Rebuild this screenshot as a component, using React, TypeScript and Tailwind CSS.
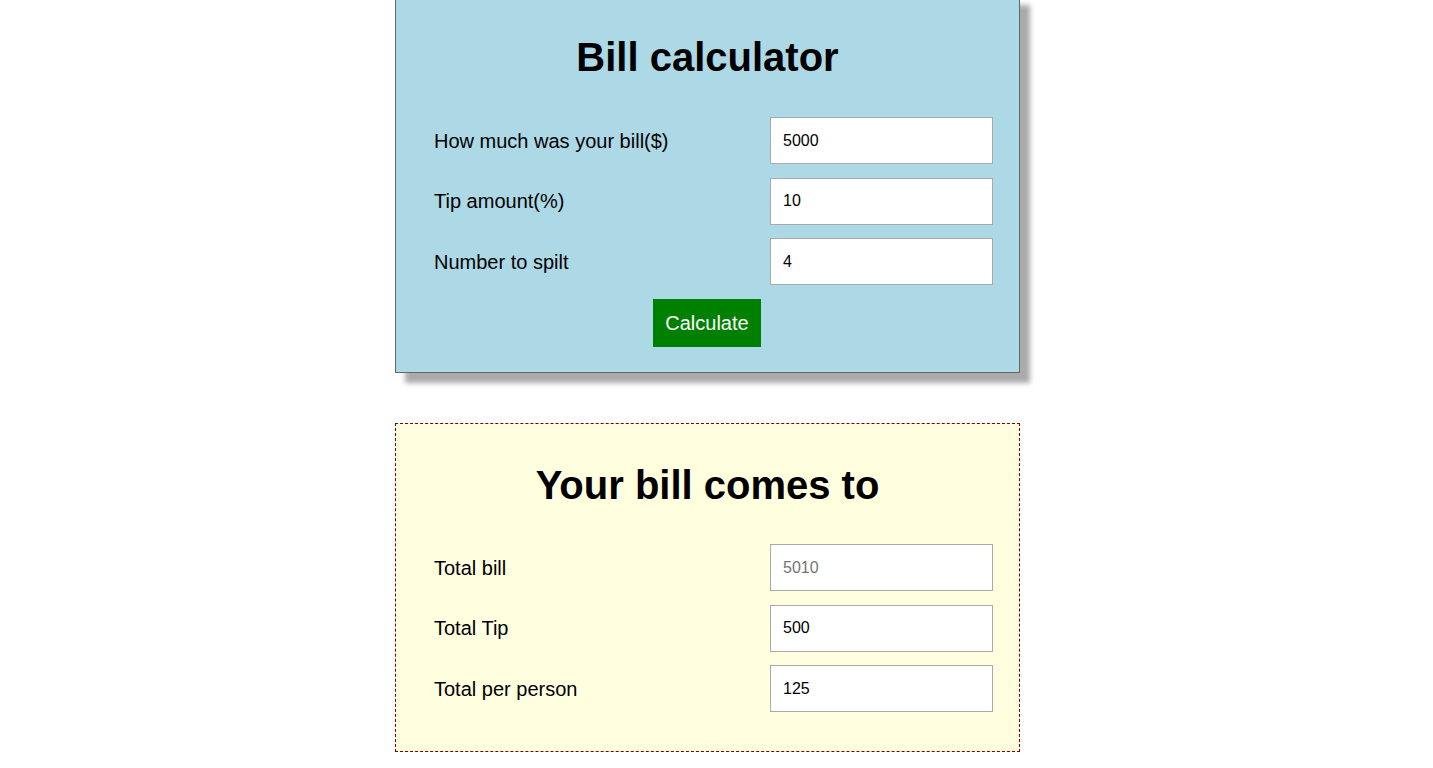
import { useState } from "react";

const fieldClass =
  "w-[223px] h-[47px] border border-[#a9a9a9] bg-white px-[12px] text-[16px] text-black outline-none placeholder:text-[#757575]";

function Row({
  label,
  value,
  placeholder,
  onChange,
}: {
  label: string;
  value: string;
  placeholder?: string;
  onChange?: (v: string) => void;
}) {
  return (
    <div className="flex items-center justify-between">
      <label className="text-[20px] text-black">{label}</label>
      <input
        type="text"
        value={value}
        placeholder={placeholder}
        readOnly={!onChange}
        onChange={(e) => onChange && onChange(e.target.value)}
        className={fieldClass}
      />
    </div>
  );
}

export default function App() {
  const [bill, setBill] = useState("5000");
  const [tip, setTip] = useState("10");
  const [people, setPeople] = useState("4");
  const [totalTip, setTotalTip] = useState("500");
  const [perPerson, setPerPerson] = useState("125");

  const calculate = () => {
    const b = parseFloat(bill) || 0;
    const t = (b * (parseFloat(tip) || 0)) / 100;
    const n = parseFloat(people) || 1;
    setTotalTip(String(t));
    setPerPerson(String(t / n));
  };

  return (
    <div
      className="min-h-screen bg-white pb-4"
      style={{ fontFamily: '"Liberation Sans", Arial, sans-serif' }}
    >
      <div className="ml-[395px] w-[625px]">
        {/* Calculator */}
        <div className="-mt-[5px] border border-[#666] bg-[#add8e6] pt-[38px] pb-[25px] pl-[38px] pr-[26px] shadow-[10px_10px_5px_#aaa]">
          <h1 className="-ml-[12px] h-[46px] text-center text-[40px] font-bold leading-[46px] text-black">
            Bill calculator
          </h1>
          <div className="mt-[37px] flex flex-col gap-[13.5px]">
            <Row label="How much was your bill($)" value={bill} onChange={setBill} />
            <Row label="Tip amount(%)" value={tip} onChange={setTip} />
            <Row label="Number to spilt" value={people} onChange={setPeople} />
          </div>
          <div className="-ml-[13px] mt-[14px] flex justify-center">
            <button
              onClick={calculate}
              className="h-[48px] w-[108px] bg-[#008000] text-[20px] text-white"
            >
              Calculate
            </button>
          </div>
        </div>

        {/* Result */}
        <div className="mt-[50px] border border-dashed border-[#800000] bg-[#ffffe0] pt-[38px] pb-[39px] pl-[38px] pr-[26px]">
          <h1 className="-ml-[12px] h-[46px] text-center text-[40px] font-bold leading-[46px] text-black">
            Your bill comes to
          </h1>
          <div className="mt-[36px] flex flex-col gap-[13.5px]">
            <Row label="Total bill" value="" placeholder="5010" />
            <Row label="Total Tip" value={totalTip} />
            <Row label="Total per person" value={perPerson} />
          </div>
        </div>
      </div>
    </div>
  );
}
